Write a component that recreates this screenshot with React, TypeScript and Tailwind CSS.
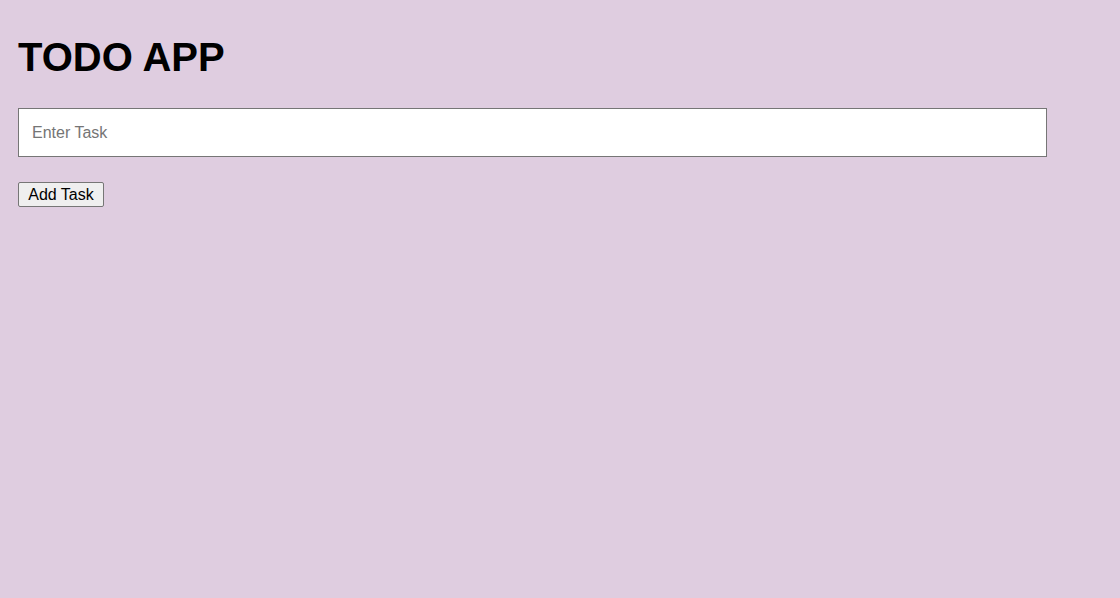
import React from "react";

export default function App() {
  return (
    <div className="min-h-[598px] w-full bg-[#dfcde0] px-[18px] font-['Liberation_Sans',Arial,sans-serif]">
      <h1 className="pt-[34px] text-[40px] leading-[46px] font-bold text-black">TODO APP</h1>
      <input
        type="text"
        placeholder="Enter Task"
        className="mt-[28px] block h-[49px] w-[1029px] border border-[#767676] bg-white px-[13px] text-[16px] text-black placeholder:text-[#757575] outline-none"
      />
      <button className="mt-[25px] block h-[25px] w-[86px] rounded-[2px] border border-[#767676] bg-[#efefef] text-[16px] leading-none text-black">
        Add Task
      </button>
    </div>
  );
}
